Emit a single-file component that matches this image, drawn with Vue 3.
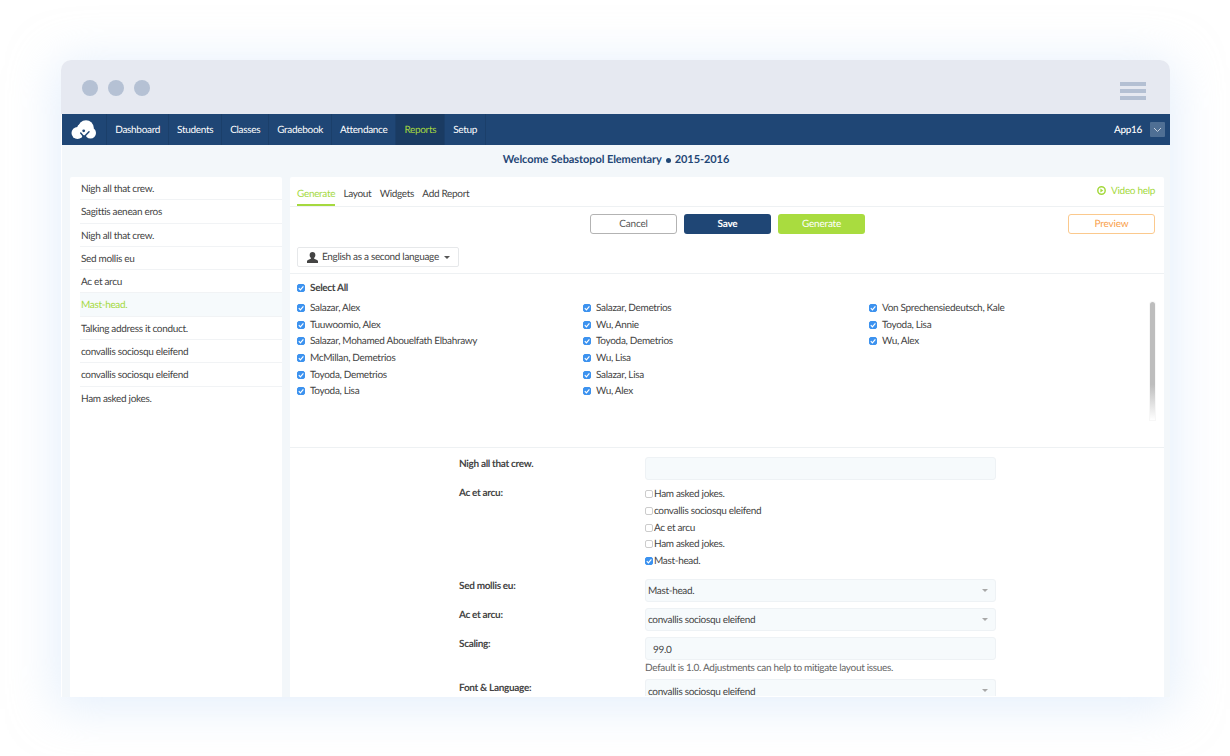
<script setup>
const navItems = ['Dashboard', 'Students', 'Classes', 'Gradebook', 'Attendance', 'Reports', 'Setup']
const sideItems = ['Nigh all that crew.', 'Sagittis aenean eros', 'Nigh all that crew.', 'Sed mollis eu', 'Ac et arcu', 'Mast-head.', 'Talking address it conduct.', 'convallis sociosqu eleifend', 'convallis sociosqu eleifend', 'Ham asked jokes.']
const tabs = ['Generate', 'Layout', 'Widgets', 'Add Report']
const studentCols = [
  ['Salazar, Alex', 'Tuuwoomio, Alex', 'Salazar, Mohamed Abouelfath Elbahrawy', 'McMillan, Demetrios', 'Toyoda, Demetrios', 'Toyoda, Lisa'],
  ['Salazar, Demetrios', 'Wu, Annie', 'Toyoda, Demetrios', 'Wu, Lisa', 'Salazar, Lisa', 'Wu, Alex'],
  ['Von Sprechensiedeutsch, Kale', 'Toyoda, Lisa', 'Wu, Alex']
]
const options = [
  { label: 'Ham asked jokes.', on: false },
  { label: 'convallis sociosqu eleifend', on: false },
  { label: 'Ac et arcu', on: false },
  { label: 'Ham asked jokes.', on: false },
  { label: 'Mast-head.', on: true }
]
</script>

<template>
  <div class="page">
    <div class="window">
      <div class="titlebar">
        <div class="dots"><i></i><i></i><i></i></div>
        <div class="burger"><i></i><i></i><i></i></div>
      </div>
      <div class="frame">
        <nav class="nav">
          <div class="logo">
            <svg width="26" height="20" viewBox="0 0 26 20">
              <circle cx="15" cy="8" r="7.800" fill="#fff"/>
              <circle cx="6.500" cy="13" r="6" fill="#fff"/>
              <circle cx="19.500" cy="13" r="5.500" fill="#fff"/>
              <circle cx="10" cy="8" r="3.800" fill="#fff"/>
              <circle cx="12.700" cy="10.800" r="1.400" fill="#1f4675"/>
              <path fill="none" stroke="#1f4675" stroke-width="1.400" stroke-linecap="round" d="M9.700 13l3.300 4M18 11.700l-5 5.300-2.300 3"/>
            </svg>
          </div>
          <a v-for="n in navItems" :key="n" class="nav-item" :class="{ active: n === 'Reports' }">{{ n }}</a>
          <div class="nav-right">
            <span class="app">App16</span>
            <span class="app-btn">
              <svg width="9" height="6" viewBox="0 0 9 6"><path d="M1 1l3.500 3.500L8 1" fill="none" stroke="#c5d0de" stroke-width="1"/></svg>
            </span>
          </div>
        </nav>
        <div class="welcome">Welcome Sebastopol Elementary <span class="bullet"></span> 2015-2016</div>
        <div class="columns">
          <aside class="side">
            <ul class="side-list">
              <li v-for="(s, i) in sideItems" :key="i" :class="{ current: s === 'Mast-head.' }">{{ s }}</li>
            </ul>
          </aside>
          <main class="main">
            <div class="tabs">
              <a v-for="t in tabs" :key="t" class="tab" :class="{ on: t === 'Generate' }">{{ t }}</a>
              <a class="video">
                <svg width="9" height="9" viewBox="0 0 9 9"><circle cx="4.500" cy="4.500" r="3.700" fill="none" stroke="#a5d93f" stroke-width="1.500"/><path d="M3.400 2.600l2.900 1.900-2.900 1.900z" fill="#a5d93f"/></svg>
                Video help
              </a>
            </div>
            <div class="actions">
              <button class="btn cancel">Cancel</button>
              <button class="btn save">Save</button>
              <button class="btn generate">Generate</button>
              <button class="btn preview">Preview</button>
            </div>
            <div class="filter">
              <div class="dropdown">
                <svg width="11" height="11" viewBox="0 0 10 10"><path fill="#444" d="M5 0c1.600 0 2.600 1.100 2.600 2.800 0 1.100-.5 2.100-1.100 2.600v.8c1.400.5 3.100 1 3.500 2v1.800H0V8.200c.4-1 2.100-1.500 3.500-2v-.8C2.900 4.900 2.400 3.900 2.400 2.800 2.400 1.100 3.400 0 5 0z"/></svg>
                <span>English as a second language</span>
                <i class="caret dark"></i>
              </div>
            </div>
            <div class="students">
              <label class="check all">
                <span class="cb on"><svg width="8" height="8" viewBox="0 0 8 8"><path d="M1.800 4.200l1.600 1.600 3-3.400" fill="none" stroke="#fff" stroke-width="1.200"/></svg></span>
                Select All
              </label>
              <div class="student-grid">
                <div v-for="(col, c) in studentCols" :key="c" class="student-col">
                  <label v-for="(n, i) in col" :key="i" class="check">
                    <span class="cb on"><svg width="8" height="8" viewBox="0 0 8 8"><path d="M1.800 4.200l1.600 1.600 3-3.400" fill="none" stroke="#fff" stroke-width="1.200"/></svg></span>
                    {{ n }}
                  </label>
                </div>
              </div>
              <div class="scrollbar"></div>
            </div>
            <div class="form">
              <div class="row r-text">
                <div class="label">Nigh all that crew.</div>
                <div class="field"></div>
              </div>
              <div class="row r-checks">
                <div class="label">Ac et arcu:</div>
                <div class="opts">
                  <label v-for="(o, i) in options" :key="i" class="opt">
                    <span class="cb" :class="{ on: o.on }">
                      <svg v-if="o.on" width="8" height="8" viewBox="0 0 8 8"><path d="M1.800 4.200l1.600 1.600 3-3.400" fill="none" stroke="#fff" stroke-width="1.200"/></svg>
                    </span>
                    {{ o.label }}
                  </label>
                </div>
              </div>
              <div class="row r-sed">
                <div class="label">Sed mollis eu:</div>
                <div class="field select">Mast-head.<i class="caret"></i></div>
              </div>
              <div class="row r-gap6">
                <div class="label">Ac et arcu:</div>
                <div class="field select">convallis sociosqu eleifend<i class="caret"></i></div>
              </div>
              <div class="row r-gap7">
                <div class="label">Scaling:</div>
                <div>
                  <div class="field num">99.0</div>
                  <div class="help">Default is 1.0. Adjustments can help to mitigate layout issues.</div>
                </div>
              </div>
              <div class="row r-gap11">
                <div class="label lower">Font &amp; Language:</div>
                <div class="field select last">convallis sociosqu eleifend<i class="caret"></i></div>
              </div>
            </div>
          </main>
        </div>
      </div>
    </div>
  </div>
</template>

<style>
html, body { margin: 0; background: #fff; }
</style>

<style scoped>
.page {
  width: 1230px;
  height: 756px;
  box-sizing: border-box;
  padding: 60px 60px 59px 61px;
  overflow: hidden;
  font-family: Lato, "Open Sans", sans-serif;
  font-size: 10px;
  letter-spacing: -.32px;
  text-rendering: geometricPrecision;
  color: #444;
  background: #fff;
}
.window {
  height: 637px;
  display: flex;
  flex-direction: column;
  border-radius: 10px 10px 0 0;
  box-shadow: 0 6px 46px 6px rgba(205, 226, 250, .5);
}
.titlebar {
  height: 54px;
  flex: none;
  background: #e6e9f1;
  border-radius: 10px 10px 0 0;
  display: flex;
  align-items: center;
  justify-content: space-between;
  padding: 0 24px 0 21px;
}
.dots { display: flex; gap: 10px; margin-top: 1px; }
.dots i { width: 16px; height: 16px; border-radius: 50%; background: #b5c1d4; }
.burger { width: 26px; display: flex; flex-direction: column; gap: 3.200px; margin-top: 8px; }
.burger i { height: 3.600px; background: #b4c0d3; }
.frame {
  flex: 1;
  min-height: 0;
  margin-left: 1px;
  background: #f3f7fa;
  display: flex;
  flex-direction: column;
}
.nav {
  height: 31px;
  flex: none;
  background: #1f4675;
  display: flex;
  align-items: stretch;
  color: #fff;
}
.logo { width: 45px; display: flex; align-items: center; justify-content: center; box-sizing: border-box; border-right: 1px solid #1b3f6a; }
.nav-item {
  display: flex;
  align-items: center;
  padding: 0 8px;
  border-right: 1px solid #1b3f6a;
}
.nav-item:first-of-type { padding-left: 8.300px; }
.nav-item.active { background: #1a3b62; color: #a5d93f; }
.nav-right { margin-left: auto; display: flex; align-items: center; padding-right: 5px; }
.app { margin-right: 8px; font-weight: 500; }
.app-btn {
  width: 15px;
  height: 15px;
  background: #4f6f94;
  border-radius: 1px;
  display: flex;
  align-items: center;
  justify-content: center;
}
.welcome {
  height: 32px;
  flex: none;
  text-align: center;
  line-height: 29px;
  font-size: 11px;
  letter-spacing: -.08px;
  font-weight: 700;
  color: #1f4675;
}
.bullet { display: inline-block; width: 5px; height: 5px; border-radius: 50%; background: #1f4675; margin: 0 1.500px; vertical-align: 0; }
.columns { flex: 1; min-height: 0; display: flex; gap: 8px; padding: 0 6px 0 8px; }
.side {
  width: 212px;
  flex: none;
  background: #fff;
  box-sizing: border-box;
  padding-left: 10px;
  border-radius: 2px 2px 0 0;
}
.side-list { list-style: none; margin: 0; padding: 0; }
.side-list li {
  height: 23.300px;
  box-sizing: border-box;
  line-height: 24px;
  padding-left: 1px;
  border-bottom: 1px solid #f1f3f5;
}
.side-list li:last-child { border-bottom: 0; }
.side-list li.current { color: #a5d93f; background: #f6fafc; }
.main {
  flex: 1;
  min-width: 0;
  background: #fff;
  border-radius: 2px 2px 0 0;
  overflow: hidden;
}
.tabs {
  height: 30px;
  box-sizing: border-box;
  border-bottom: 1px solid #eef1f3;
  display: flex;
  align-items: flex-start;
  padding: 0 9px 0 7px;
  gap: 8.300px;
}
.tab {
  height: 29px;
  box-sizing: border-box;
  padding-top: 10.500px;
  line-height: 13px;
}
.tab.on { color: #a5d93f; border-bottom: 2px solid #a5d93f; }
.video {
  margin-left: auto;
  color: #a5d93f;
  display: flex;
  align-items: center;
  gap: 5px;
  height: 27px;
}
.actions {
  position: relative;
  display: flex;
  justify-content: flex-start;
  gap: 7px;
  padding: 7px 9px 0 300px;
}
.btn {
  width: 87px;
  height: 19.500px;
  box-sizing: border-box;
  border-radius: 3px;
  border: 1px solid transparent;
  font-family: inherit;
  font-size: 10px;
  letter-spacing: -.2px;
  text-rendering: geometricPrecision;
  line-height: 16px;
  padding: 0;
  background: #fff;
}
.cancel { border-color: #b3b3b3; color: #555; }
.save { background: #1f4675; color: #fff; font-weight: 700; }
.generate { background: #a9dc3f; color: #fff; }
.preview { margin-left: auto; border-color: #fbc98d; color: #f9a04a; }
.filter {
  margin-top: 13.500px;
  padding: 0 0 6px 7px;
  border-bottom: 1px solid #eef1f3;
}
.dropdown {
  width: 162px;
  height: 20px;
  box-sizing: border-box;
  border: 1px solid #e6e8ea;
  border-radius: 2px;
  display: flex;
  align-items: center;
  padding-left: 9px;
  gap: 4px;
  white-space: nowrap;
}
.dropdown .caret { margin-left: 1px; }
.caret {
  width: 0;
  height: 0;
  border-left: 3px solid transparent;
  border-right: 3px solid transparent;
  border-top: 3px solid #9a9a9a;
}
.caret.dark { border-top-color: #555; }
.students {
  position: relative;
  height: 174px;
  box-sizing: border-box;
  padding: 6.500px 0 0 7px;
  border-bottom: 1px solid #eef1f3;
}
.check { display: flex; align-items: center; gap: 5px; height: 16.700px; white-space: nowrap; }
.check.all { font-weight: 700; height: 14px; margin-bottom: 5px; }
.cb {
  width: 8px;
  height: 8px;
  flex: none;
  box-sizing: border-box;
  border: 1px solid #ccc;
  border-radius: 2px;
  background: #fff;
  display: flex;
  align-items: center;
  justify-content: center;
}
.cb.on { background: #3c92ef; border-color: #3c92ef; }
.cb svg { flex: none; }
.student-grid { display: grid; grid-template-columns: 286px 286px 1fr; }
.scrollbar {
  position: absolute;
  left: 860px;
  top: 28px;
  width: 5px;
  height: 118px;
  border-radius: 3px 3px 0 0;
  background: linear-gradient(#bdbdbd 0, #bdbdbd 70%, rgba(189, 189, 189, 0) 100%);
  box-shadow: 0 0 0 1px rgba(200, 200, 200, .15);
}
.form { padding: 9px 0 0 169px; }
.row { display: grid; grid-template-columns: 186px 351px; }
.label { font-weight: 700; line-height: 14px; }
.label.lower { padding-top: 1.500px; }
.field {
  height: 23px;
  box-sizing: border-box;
  background: #f6fafc;
  border: 1px solid #eef2f5;
  border-radius: 3px;
  line-height: 22px;
  padding-left: 2px;
}
.select { display: flex; align-items: center; justify-content: space-between; padding: 1px 7px 0 2px; }
.select .caret { border-top-color: #a8a8a8; }
.last { height: 17px; border-bottom: 0; border-radius: 3px 3px 0 0; padding-top: 5px; align-items: flex-start; line-height: 14px; }
.last .caret { margin-top: 4px; }
.num { padding: 1px 0 0 7px; }
.r-checks { margin-top: 6px; }
.opt { display: flex; align-items: center; height: 16.700px; white-space: nowrap; }
.opt .cb { margin-right: 1px; }
.r-sed { margin-top: 9.500px; }
.r-gap6 { margin-top: 6px; }
.r-gap7 { margin-top: 6.500px; }
.r-gap11 { margin-top: 5px; }
.help { line-height: 13px; color: #666; padding-top: 2px; height: 12px; }
</style>
